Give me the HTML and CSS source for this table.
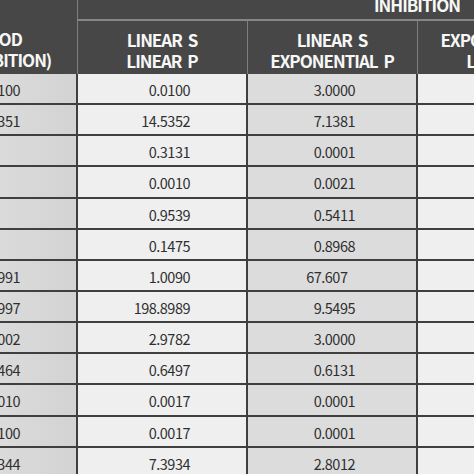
FILE: index.html
```html
<!DOCTYPE html>
<html>
<head>
<meta charset="utf-8">
<link rel="stylesheet" href="styles.css">
</head>
<body>
<div class="frame">
<table class="data">
  <colgroup>
    <col class="c"><col class="c"><col class="c"><col class="c"><col class="c">
  </colgroup>
  <thead>
    <tr class="h1">
      <th class="method" rowspan="2">METHOD<br>(NO INHIBITION)</th>
      <th class="group" colspan="4">INHIBITION</th>
    </tr>
    <tr class="h2">
      <th>LINEAR S<br>LINEAR P</th>
      <th>LINEAR S<br>EXPONENTIAL P</th>
      <th>EXPONENTIAL S<br>LINEAR P</th>
      <th>EXPONENTIAL S<br>EXPONENTIAL P</th>
    </tr>
  </thead>
  <tbody>
    <tr><td class="k">0.0100</td><td>0.0100</td><td class="d">3.0000</td><td>0.0100</td><td>3.0000</td></tr>
    <tr><td class="k">8.5351</td><td>14.5352</td><td class="d">7.1381</td><td>8.5351</td><td>7.1381</td></tr>
    <tr><td class="k"></td><td>0.3131</td><td class="d">0.0001</td><td></td><td></td></tr>
    <tr><td class="k"></td><td>0.0010</td><td class="d">0.0021</td><td></td><td></td></tr>
    <tr><td class="k"></td><td>0.9539</td><td class="d">0.5411</td><td></td><td></td></tr>
    <tr><td class="k"></td><td>0.1475</td><td class="d">0.8968</td><td></td><td></td></tr>
    <tr><td class="k">0.9991</td><td>1.0090</td><td class="d">67.607<span class="pad">0</span></td><td>0.9991</td><td>1.0090</td></tr>
    <tr><td class="k">9.9997</td><td>198.8989</td><td class="d">9.5495</td><td>9.9997</td><td>9.5495</td></tr>
    <tr><td class="k">3.0002</td><td>2.9782</td><td class="d">3.0000</td><td>3.0002</td><td>3.0000</td></tr>
    <tr><td class="k">0.6464</td><td>0.6497</td><td class="d">0.6131</td><td>0.6464</td><td>0.6131</td></tr>
    <tr><td class="k">0.0010</td><td>0.0017</td><td class="d">0.0001</td><td>0.0010</td><td>0.0001</td></tr>
    <tr><td class="k">0.0100</td><td>0.0017</td><td class="d">0.0001</td><td>0.0100</td><td>0.0001</td></tr>
    <tr><td class="k">7.3344</td><td>7.3934</td><td class="d">2.8012</td><td>7.3344</td><td>2.8012</td></tr>
    <tr><td class="k">1.0000</td><td>1.0000</td><td class="d">1.0000</td><td>1.0000</td><td>1.0000</td></tr>
  </tbody>
</table>
</div>
</body>
</html>
```
FILE: styles.css
```css
html, body {
  margin: 0;
  padding: 0;
  background: #efefef;
}
.frame {
  width: 474px;
  height: 474px;
  overflow: hidden;
}
.data {
  border-collapse: collapse;
  table-layout: fixed;
  width: 850px;
  margin-left: -94px;
  margin-top: -12px;
  font-family: "Noto Sans CJK KR", "Noto Sans", sans-serif;
}
.data col.c { width: 170px; }
.data th {
  background: #474747;
  color: #f7f7f7;
  font-weight: 700;
  font-size: 17px;
  line-height: 21px;
  letter-spacing: -1px;
  word-spacing: 3px;
  text-align: center;
  border-left: 1px solid #7e7e7e;
  border-right: 1px solid #7e7e7e;
  padding: 0;
}
.data .h1 { height: 32px; }
.data .h1 .group {
  vertical-align: bottom;
  padding-bottom: 4px;
  border-bottom: 2px solid #858585;
}
.data .h1 .method {
  vertical-align: bottom;
  padding: 0 8px 4px 0;
}
.data .h2 { height: 54px; }
.data .h2 th {
  vertical-align: middle;
  padding-top: 4px;
}
.data td {
  height: 27.15px;
  padding: 2px 56px 0 0;
  text-align: right;
  font-size: 14.5px;
  letter-spacing: -0.5px;
  color: #2f2f2f;
  background: #efefef;
  border: 2px solid #3f3f3f;
  border-top: none;
  vertical-align: middle;
}
.data td.k {
  background: linear-gradient(to right, #e4e4e4, #d3d3d3);
}
.data td.d {
  background: #dcdcdc;
  padding-right: 61px;
}
.pad { visibility: hidden; }
```
